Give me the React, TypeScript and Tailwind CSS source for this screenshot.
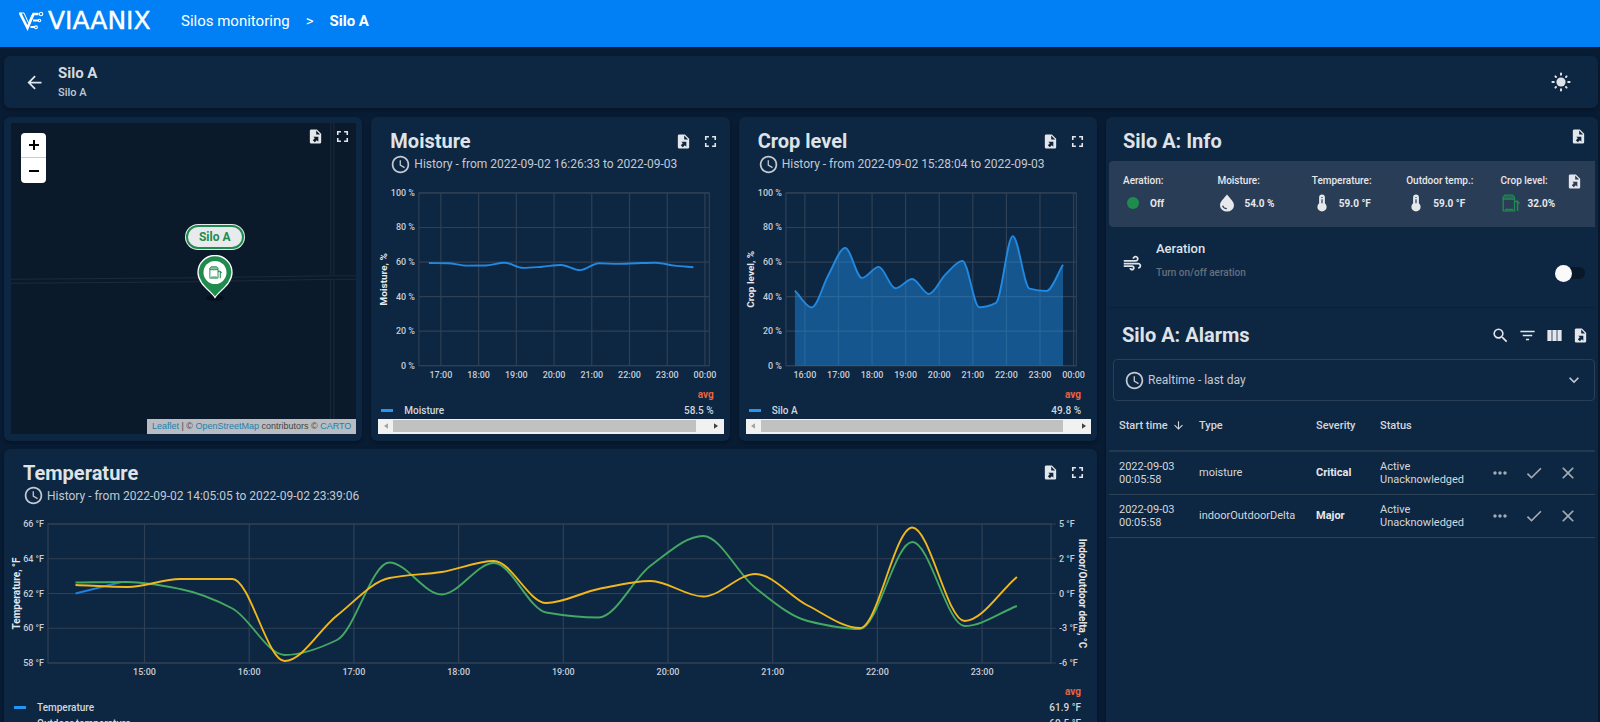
import { useId, type ReactNode } from 'react';
import {
  MdAccessTime,
  MdAir,
  MdArrowBack,
  MdArrowDownward,
  MdCheck,
  MdClose,
  MdFilterList,
  MdFullscreen,
  MdKeyboardArrowDown,
  MdMoreHoriz,
  MdSearch,
  MdViewColumn,
} from 'react-icons/md';

type Point = [number, number];

/** Monotone cubic interpolation: flat at local extremes, no overshoot. */
function smoothPath(points: Point[]): string {
  const n = points.length;
  const slopes: number[] = [];
  for (let i = 0; i < n - 1; i++) {
    slopes.push((points[i + 1][1] - points[i][1]) / (points[i + 1][0] - points[i][0]));
  }
  const tangents = points.map((_, i) => {
    if (i === 0) return slopes[0];
    if (i === n - 1) return slopes[n - 2];
    const a = slopes[i - 1];
    const b = slopes[i];
    return a * b <= 0 ? 0 : (2 * a * b) / (a + b);
  });
  let d = `M${points[0][0]},${points[0][1]}`;
  for (let i = 0; i < n - 1; i++) {
    const [x0, y0] = points[i];
    const [x1, y1] = points[i + 1];
    const h = (x1 - x0) / 3;
    d += `C${x0 + h},${y0 + tangents[i] * h} ${x1 - h},${y1 - tangents[i + 1] * h} ${x1},${y1}`;
  }
  return d;
}

const evenly = (start: number, step: number, values: number[]): Point[] =>
  values.map((v, i) => [start + step * i, v]);

function ExportIcon() {
  return (
    <svg viewBox="0 0 24 24" className="size-[17px]" fill="currentColor" aria-hidden="true">
      <path
        fillRule="evenodd"
        d="M6,2C4.89,2 4,2.9 4,4V20A2,2 0 0,0 6,22H18A2,2 0 0,0 20,20V8L14,2M13,3.5L18.5,9H13M8.93,12.22H16V19.29L13.88,17.17L11.05,20L8.22,17.17L11.05,14.35"
      />
    </svg>
  );
}

function IconButton({ label, children, className = '' }: { label: string; children: ReactNode; className?: string }) {
  return (
    <button type="button" aria-label={label} className={`flex shrink-0 items-center justify-center text-[#e3e6ea] ${className}`}>
      {children}
    </button>
  );
}

function SiloIcon({ className }: { className: string }) {
  return (
    <svg viewBox="0 0 18 18" className={className} fill="none" stroke="currentColor" aria-hidden="true">
      <path d="M1 5.2V3.2L3 1h7.5l2 2.2v2z" fill="currentColor" fillOpacity=".55" strokeWidth="1.2" />
      <path d="M1.2 5v11.8h11.3V5M3 15.3h8" strokeWidth="1.3" />
      <path d="M12.5 7.8l2.5-.8 2.5 2.6M15.6 8v9" strokeWidth="1.5" />
    </svg>
  );
}

function DropIcon() {
  return (
    <svg viewBox="0 0 16 18" className="h-[18px] w-4" aria-hidden="true">
      <path d="M8 .5C5.5 3.8 1 7.6 1 11.2a7 6.3 0 0 0 14 0C15 7.6 10.5 3.8 8 .5z" fill="#e6e8eb" />
      <path d="M3.6 11.6c.6 2 2 3 4.2 3.1" fill="none" stroke="#2a3d57" strokeWidth="1.2" />
    </svg>
  );
}

function ThermometerIcon() {
  return (
    <svg viewBox="0 0 12 18" className="h-[18px] w-3" aria-hidden="true">
      <path d="M6 .5a2.9 2.9 0 0 0-2.9 2.9v5.9a4.6 4.6 0 1 0 5.8 0V3.4A2.9 2.9 0 0 0 6 .5z" fill="#e6e8eb" />
      <path d="M5.4 3h1.2v1H5.4zM5.4 5.2h1.2v4H5.4z" fill="#2a3d57" />
    </svg>
  );
}

function SunIcon() {
  return (
    <svg viewBox="0 0 20 20" className="size-5" fill="#dfe2e6" stroke="#dfe2e6" aria-hidden="true">
      <circle cx="10" cy="10" r="4.6" stroke="none" />
      <path
        d="M10 1.4v1.4M10 17.2v1.4M1.4 10h1.4M17.2 10h1.4M4.4 4.4l.6.6M15 15l.6.6M4.4 15.6l.6-.6M15 5l.6-.6"
        strokeWidth="2"
        strokeLinecap="round"
      />
    </svg>
  );
}

function Logo() {
  return (
    <svg viewBox="0 0 134 30" className="h-[30px] w-[134px]" role="img" aria-label="VIAANIX">
      <g fill="none" stroke="#fff" transform="translate(-1 5)">
        <path d="M1 2h5l4.5 10L14 4" strokeWidth="1" />
        <path d="M2 2l7.5 15L15.500 3h5" strokeWidth="2.6" />
        <path d="M15 9.5h6M12.5 16h4.5" strokeWidth="2" />
        <circle cx="23" cy="3" r="1.7" strokeWidth="1.1" />
        <circle cx="21.500" cy="9.500" r="1.2" strokeWidth="1.1" />
        <circle cx="18" cy="16.3" r="1.4" strokeWidth="1.1" />
      </g>
      <text x="29" y="23" fill="#fff" stroke="#fff" strokeWidth=".4" className="font-['DejaVu_Sans'] text-[25px]">
        VIAANIX
      </text>
    </svg>
  );
}

function Card({ children, className = '' }: { children: ReactNode; className?: string }) {
  return (
    <section className={`min-w-0 rounded-md bg-[#0d2642] shadow-[0_2px_4px_rgba(0,0,0,0.3)] ${className}`}>{children}</section>
  );
}

function WidgetHeader({ title, history }: { title: string; history: string }) {
  return (
    <header className="pt-[6px] pr-1 pl-3">
      <div className="flex h-6 items-center">
        <h2 className="min-w-0 flex-1 truncate text-[20px] font-bold text-[#dfe2e6]">{title}</h2>
        <div className="flex items-center gap-[9px]">
          <IconButton label={`Export ${title}`}>
            <ExportIcon />
          </IconButton>
          <IconButton label={`Expand ${title}`}>
            <MdFullscreen className="size-[19px]" />
          </IconButton>
        </div>
      </div>
      <button type="button" className="flex h-[22px] max-w-full items-center gap-[3px] text-[12px] text-[#c3c9d1]">
        <MdAccessTime className="size-[21px] shrink-0" />
        <span className="truncate">{history}</span>
      </button>
    </header>
  );
}

interface Tick {
  at: number;
  label: string;
}

const hours = (first: number, count: number, start: number, step: number): Tick[] =>
  Array.from({ length: count }, (_, i) => ({
    at: start + step * i,
    label: `${String((first + i) % 24).padStart(2, '0')}:00`,
  }));

interface ChartProps {
  width: number;
  height: number;
  plot: { left: number; right: number; top: number; bottom: number };
  xTicks: Tick[];
  yLabels: string[];
  yTitle: { text: string; x: number };
  rightLabels?: string[];
  rightTitle?: { text: string; x: number };
  children: ReactNode;
}

function Chart({ width, height, plot, xTicks, yLabels, yTitle, rightLabels, rightTitle, children }: ChartProps) {
  const { left, right, top, bottom } = plot;
  const step = (bottom - top) / (yLabels.length - 1);
  const middle = (top + bottom) / 2;
  return (
    <svg viewBox={`0 0 ${width} ${height}`} className="block h-auto w-full text-[9px] font-medium" fill="#c9ced6">
      <g fill="none" stroke="#2f4054" strokeWidth="1.2">
        <rect x={left} y={top} width={right - left} height={bottom - top} />
        {yLabels.map((label, i) => (
          <path key={label} d={`M${left},${top + step * i}H${rightLabels ? right + 5 : right}`} />
        ))}
        {xTicks.map((t) => (
          <path key={t.label} d={`M${t.at},${top}V${bottom}`} />
        ))}
      </g>
      {children}
      {yLabels.map((label, i) => (
        <text key={label} x={left - 4} y={top + step * i + 3} textAnchor="end">
          {label}
        </text>
      ))}
      {rightLabels?.map((label, i) => (
        <text key={label} x={right + 8} y={top + step * i + 3}>
          {label}
        </text>
      ))}
      {xTicks.map((t) => (
        <text key={t.label} x={t.at} y={bottom + 12} textAnchor="middle">
          {t.label}
        </text>
      ))}
      <text transform={`translate(${yTitle.x} ${middle}) rotate(-90)`} textAnchor="middle" fill="#e6e8eb" className="text-[10px] font-bold">
        {yTitle.text}
      </text>
      {rightTitle && (
        <text transform={`translate(${rightTitle.x} ${middle}) rotate(90)`} textAnchor="middle" fill="#e6e8eb" className="text-[10px] font-bold">
          {rightTitle.text}
        </text>
      )}
    </svg>
  );
}

function Legend({ rows }: { rows: { name: string; value: string; color: string }[] }) {
  return (
    <table className="w-full text-[10px] leading-4 font-medium text-[#d3d7dc]">
      <thead>
        <tr>
          <th className="w-[26px]" />
          <th />
          <th className="pr-[10px] text-right font-bold text-[#e8633f]">avg</th>
        </tr>
      </thead>
      <tbody>
        {rows.map((row) => (
          <tr key={row.name}>
            <td className="pl-[3px]">
              <svg viewBox="0 0 12 3" className="h-[3px] w-3" aria-hidden="true">
                <rect width="12" height="3" fill={row.color} />
              </svg>
            </td>
            <td>{row.name}</td>
            <td className="pr-[10px] text-right">{row.value}</td>
          </tr>
        ))}
      </tbody>
    </table>
  );
}

function ScrollBar() {
  return (
    <div className="flex h-[15px] items-center bg-[#f1f1f1]">
      <button type="button" aria-label="Scroll left" className="flex w-[15px] items-center justify-center">
        <svg viewBox="0 0 6 8" className="h-[6px] w-1" fill="#a3a3a3">
          <path d="M6 0v8L0 4z" />
        </svg>
      </button>
      <div className="h-3 flex-1">
        <div className="h-full w-24/25 bg-[#c1c1c1]" />
      </div>
      <button type="button" aria-label="Scroll right" className="flex w-[15px] items-center justify-center">
        <svg viewBox="0 0 6 8" className="h-[6px] w-1" fill="#404040">
          <path d="M0 0v8l6-4z" />
        </svg>
      </button>
    </div>
  );
}

const SMALL_PLOT = { left: 41, right: 332, top: 18, bottom: 191 };
const PERCENT_LABELS = ['100 %', '80 %', '60 %', '40 %', '20 %', '0 %'];
const percentY = (v: number) => 191 - v * 1.73;

function MoistureCard() {
  const values = [59.4, 59.3, 57.9, 58, 59.6, 56.6, 57.3, 58.3, 55.3, 59.3, 58.9, 59.3, 59.6, 57.9, 57];
  return (
    <Card className="pt-[6px] pr-[6px] pb-[7px] pl-[7px]">
      <WidgetHeader title="Moisture" history="History - from 2022-09-02 16:26:33 to 2022-09-03" />
      <Chart
        width={346}
        height={212}
        plot={SMALL_PLOT}
        xTicks={hours(17, 8, 63, 37.8)}
        yLabels={PERCENT_LABELS}
        yTitle={{ text: 'Moisture, %', x: 9 }}
      >
        <path d={smoothPath(evenly(51, 18.93, values.map(percentY)))} fill="none" stroke="#2288e0" strokeWidth="1.9" />
      </Chart>
      <Legend rows={[{ name: 'Moisture', value: '58.5 %', color: '#2196f3' }]} />
      <ScrollBar />
    </Card>
  );
}

function CropCard() {
  const values = [43.4, 33.7, 52.5, 68.2, 50.8, 57.2, 44.8, 50.2, 41.5, 53, 60.7, 33.8, 36.4, 75, 44.6, 43.2, 58.4];
  const line = smoothPath(evenly(49, 16.79, values.map(percentY)));
  return (
    <Card className="pt-[6px] pr-[6px] pb-[7px] pl-[7px]">
      <WidgetHeader title="Crop level" history="History - from 2022-09-02 15:28:04 to 2022-09-03" />
      <Chart
        width={346}
        height={212}
        plot={{ ...SMALL_PLOT, left: 40, right: 331 }}
        xTicks={hours(16, 9, 59, 33.65)}
        yLabels={PERCENT_LABELS}
        yTitle={{ text: 'Crop level, %', x: 8 }}
      >
        <path d={`${line}V191H49Z`} fill="#2196f3" fillOpacity=".43" />
        <path d={line} fill="none" stroke="#2288e0" strokeWidth="1.9" />
      </Chart>
      <Legend rows={[{ name: 'Silo A', value: '49.8 %', color: '#2196f3' }]} />
      <ScrollBar />
    </Card>
  );
}

function TemperatureCard() {
  const indoor = [86.5, 75];
  const outdoor = [75.5, 75, 82, 101.5, 148, 133, 55.5, 87.5, 56, 105.5, 110.5, 58.5, 29, 81, 114, 122, 35, 119, 99];
  const delta = [78, 80, 72, 72, 154, 108.5, 71, 65, 54, 96, 82, 74, 89.5, 67, 98.5, 121, 20.5, 114, 70];
  return (
    <Card className="pt-[6px] pr-[6px] pb-[7px] pl-[7px]">
      <WidgetHeader title="Temperature" history="History - from 2022-09-02 14:05:05 to 2022-09-02 23:39:06" />
      <Chart
        width={1080}
        height={177}
        plot={{ left: 37, right: 1040, top: 17, bottom: 156 }}
        xTicks={hours(15, 9, 133.5, 104.7)}
        yLabels={['66 °F', '64 °F', '62 °F', '60 °F', '58 °F']}
        yTitle={{ text: 'Temperature, °F', x: 9 }}
        rightLabels={['5 °F', '2 °F', '0 °F', '-3 °F', '-6 °F']}
        rightTitle={{ text: 'Indoor/Outdoor delta, °C', x: 1068 }}
      >
        <g fill="none" strokeWidth="1.9">
          <path d={smoothPath(evenly(64.5, 46, indoor))} stroke="#2080dc" />
          <path d={smoothPath(evenly(64.5, 52.3, outdoor))} stroke="#45a862" />
          <path d={smoothPath(evenly(64.5, 52.3, delta))} stroke="#f0b81c" />
        </g>
      </Chart>
      <Legend
        rows={[
          { name: 'Temperature', value: '61.9 °F', color: '#2196f3' },
          { name: 'Outdoor temperature', value: '60.5 °F', color: '#4caf50' },
        ]}
      />
    </Card>
  );
}

function MapCard() {
  return (
    <Card className="flex pt-[6px] pr-[6px] pb-[7px] pl-[7px]">
      <div className="relative flex-1 overflow-hidden bg-[#0b1a2a]">
        <svg viewBox="0 0 346 311" preserveAspectRatio="none" className="absolute inset-0 size-full" fill="none" stroke="#1c2b3a">
          <path d="M0 156.500L180 155l140-2h26M0 160.500L180 159l140-2.500h26M320.500 0v152M323.500 0v152M320 157v154M323.500 157v154" />
        </svg>
        <div className="absolute top-[10px] left-[10px] flex flex-col divide-y divide-[#ccc] overflow-hidden rounded-sm bg-white text-black">
          <button type="button" aria-label="Zoom in" className="flex size-[25px] items-center justify-center">
            <svg viewBox="0 0 12 12" className="size-3" stroke="currentColor" strokeWidth="2">
              <path d="M1 6h10M6 1v10" />
            </svg>
          </button>
          <button type="button" aria-label="Zoom out" className="flex size-[25px] items-center justify-center">
            <svg viewBox="0 0 12 12" className="size-3" stroke="currentColor" strokeWidth="2">
              <path d="M1 6h10" />
            </svg>
          </button>
        </div>
        <div className="absolute top-1 right-1 flex items-center gap-[9px]">
          <IconButton label="Export map">
            <ExportIcon />
          </IconButton>
          <IconButton label="Expand map">
            <MdFullscreen className="size-[19px]" />
          </IconButton>
        </div>
        <div className="absolute top-[101px] left-[59%] flex -translate-x-1/2 flex-col items-center gap-[5px]">
          <div className="rounded-full bg-[#e8eaed] p-px">
            <div className="flex h-6 w-[58px] items-center justify-center rounded-full border-2 border-[#1f8c4e] bg-[#e8eaed] text-[12px] font-bold text-[#1f8c4e]">
              Silo A
            </div>
          </div>
          <div className="relative">
            <svg viewBox="0 0 36 47" className="h-[47px] w-9" aria-hidden="true">
              <ellipse cx="18" cy="43" rx="9" ry="3" fill="#06101c" />
              <path d="M18 42.500C14 36 1 29 1 17.500a17 17 0 0 1 34 0C35 29 22 36 18 42.500z" fill="#1f8c4e" stroke="#fff" strokeWidth="1.3" />
              <circle cx="18" cy="17.500" r="11.500" fill="#fff" />
            </svg>
            <SiloIcon className="absolute top-[11px] left-3 size-[13px] text-[#1f8c4e]" />
          </div>
        </div>
        <div className="absolute right-0 bottom-0 bg-[#b9bdc2] px-[5px] font-['Liberation_Sans'] text-[9px] leading-[15px] text-[#444]">
          <a href="#leaflet" className="text-[#1a80b0]">Leaflet</a> | © <a href="#osm" className="text-[#1a80b0]">OpenStreetMap</a> contributors ©{' '}
          <a href="#carto" className="text-[#1a80b0]">CARTO</a>
        </div>
      </div>
    </Card>
  );
}

function Reading({ label, value, icon, action }: { label: string; value: string; icon: ReactNode; action?: ReactNode }) {
  return (
    <div className="flex min-w-0 justify-between">
      <div>
        <div className="text-[10px] leading-4 font-medium whitespace-nowrap text-[#e6e8eb]">{label}</div>
        <div className="mt-1 flex h-5 items-center gap-[7px] text-[10px] font-bold text-[#e6e8eb]">
          <span className="flex w-5 justify-center">{icon}</span>
          {value}
        </div>
      </div>
      {action}
    </div>
  );
}

const ALARMS = [
  { type: 'moisture', severity: 'Critical' },
  { type: 'indoorOutdoorDelta', severity: 'Major' },
];

function SidePanel() {
  const switchId = useId();
  return (
    <Card className="flex flex-col px-[3px]">
      <header className="flex h-11 items-start justify-between pr-2 pl-[14px]">
        <h2 className="pt-3 text-[20px] leading-6 font-bold text-[#dfe2e6]">Silo A: Info</h2>
        <IconButton label="Export info" className="mt-[11px]">
          <ExportIcon />
        </IconButton>
      </header>
      <div className="grid h-[66px] shrink-0 grid-cols-5 rounded-l-sm bg-[#2a3d57] pt-3 pl-[14px]">
        <Reading label="Aeration:" value="Off" icon={<span className="size-3 rounded-full bg-[#1f8c4e]" />} />
        <Reading label="Moisture:" value="54.0 %" icon={<DropIcon />} />
        <Reading label="Temperature:" value="59.0 °F" icon={<ThermometerIcon />} />
        <Reading label="Outdoor temp.:" value="59.0 °F" icon={<ThermometerIcon />} />
        <Reading
          label="Crop level:"
          value="32.0%"
          icon={<SiloIcon className="size-[18px] text-[#1f8c4e]" />}
          action={
            <IconButton label="Export readings" className="-ml-4 mr-3 h-4">
              <ExportIcon />
            </IconButton>
          }
        />
      </div>
      <div className="flex h-[81px] shrink-0 border-b border-[#0a2039] pr-[10px] pl-[13px]">
        <MdAir className="mt-[26px] size-[21px] text-[#dfe2e6]" />
        <label htmlFor={switchId} className="flex-1 pt-3 pl-[13px]">
          <span className="block text-[13px] leading-5 font-medium text-[#dfe2e6]">Aeration</span>
          <span className="mt-1 block text-[10px] leading-5 font-medium text-[#66707d]">Turn on/off aeration</span>
        </label>
        <input
          id={switchId}
          type="checkbox"
          role="switch"
          className="mt-10 flex h-3 w-[30px] appearance-none items-center rounded-full bg-[#081829] before:block before:size-[17px] before:shrink-0 before:rounded-full before:bg-[#fafafa] checked:justify-end"
        />
      </div>
      <header className="flex h-[51px] shrink-0 items-center justify-between pt-[3px] pr-[6px] pl-[13px]">
        <h2 className="text-[20px] font-bold text-[#dfe2e6]">Silo A: Alarms</h2>
        <div className="flex items-center gap-2">
          <IconButton label="Search alarms">
            <MdSearch className="size-[19px]" />
          </IconButton>
          <IconButton label="Filter alarms">
            <MdFilterList className="size-[19px]" />
          </IconButton>
          <IconButton label="Choose columns">
            <MdViewColumn className="size-[19px]" />
          </IconButton>
          <IconButton label="Export alarms">
            <ExportIcon />
          </IconButton>
        </div>
      </header>
      <button
        type="button"
        className="ml-1 flex h-[42px] shrink-0 items-center gap-[3px] rounded-sm border border-[#2a3f56] px-[10px] text-[12px] text-[#c3c9d1]"
      >
        <MdAccessTime className="size-[21px]" />
        <span className="flex-1 text-left">Realtime - last day</span>
        <MdKeyboardArrowDown className="size-5" />
      </button>
      <table className="w-full table-fixed text-left text-[11px] leading-[13px] text-[#d3d7dc]">
        <colgroup>
          <col className="w-[90px]" />
          <col className="w-[117px]" />
          <col className="w-16" />
          <col className="w-[103px]" />
          <col />
        </colgroup>
        <thead>
          <tr className="h-[50px] border-b-2 border-[#22394f] font-medium">
            <th className="pl-[10px] font-medium">
              <span className="flex items-center gap-1 whitespace-nowrap">
                Start time <MdArrowDownward className="size-[13px]" />
              </span>
            </th>
            <th className="font-medium">Type</th>
            <th className="font-medium">Severity</th>
            <th className="font-medium">Status</th>
            <th aria-label="Actions" />
          </tr>
        </thead>
        <tbody>
          {ALARMS.map((alarm) => (
            <tr key={alarm.type} className="h-[43px] border-b border-[#2c4056]">
              <td className="pl-[10px]">
                2022-09-03
                <br />
                00:05:58
              </td>
              <td>{alarm.type}</td>
              <td className="font-bold text-[#e6e8eb]">{alarm.severity}</td>
              <td>
                Active
                <br />
                Unacknowledged
              </td>
              <td>
                <div className="flex">
                  <button type="button" aria-label="Details" className="flex w-[34px] justify-center text-[#a3abb5]">
                    <MdMoreHoriz className="size-5" />
                  </button>
                  <button type="button" aria-label="Acknowledge" className="flex w-[34px] justify-center text-[#a3abb5]">
                    <MdCheck className="size-5" />
                  </button>
                  <button type="button" aria-label="Clear" className="flex w-[34px] justify-center text-[#a3abb5]">
                    <MdClose className="size-5" />
                  </button>
                </div>
              </td>
            </tr>
          ))}
        </tbody>
      </table>
      <footer className="mt-auto border-t border-[#2c4056]" />
    </Card>
  );
}

export default function App() {
  return (
    <div className="flex h-screen flex-col overflow-hidden bg-[#081c34] font-['Roboto',sans-serif]">
      <header className="flex h-[47px] shrink-0 items-center bg-[#0080f4] pb-[5px] pl-[19px] text-[15px] text-white">
        <Logo />
        <nav className="flex items-center pl-7">
          <a href="#silos">Silos monitoring</a>
          <span className="px-4">&gt;</span>
          <a href="#silo-a" className="font-bold">
            Silo A
          </a>
        </nav>
      </header>
      <main className="flex min-h-0 flex-1 flex-col gap-[9px] pt-[9px] pr-[2px] pl-1">
        <Card className="flex h-[52px] shrink-0 items-center pr-[27px] pl-5">
          <IconButton label="Back">
            <MdArrowBack className="size-[21px]" />
          </IconButton>
          <div className="flex-1 pt-px pl-[13px]">
            <h1 className="text-[15px] leading-5 font-bold text-[#d5d9de]">Silo A</h1>
            <p className="text-[11px] leading-5 font-medium text-[#c3c9d1]">Silo A</p>
          </div>
          <IconButton label="Toggle theme">
            <SunIcon />
          </IconButton>
        </Card>
        <div className="grid min-h-0 flex-1 grid-cols-[1093fr_492fr] gap-[9px]">
          <div className="flex min-w-0 flex-col gap-2">
            <div className="grid grid-cols-3 gap-[9px]">
              <MapCard />
              <MoistureCard />
              <CropCard />
            </div>
            <TemperatureCard />
          </div>
          <SidePanel />
        </div>
      </main>
    </div>
  );
}
